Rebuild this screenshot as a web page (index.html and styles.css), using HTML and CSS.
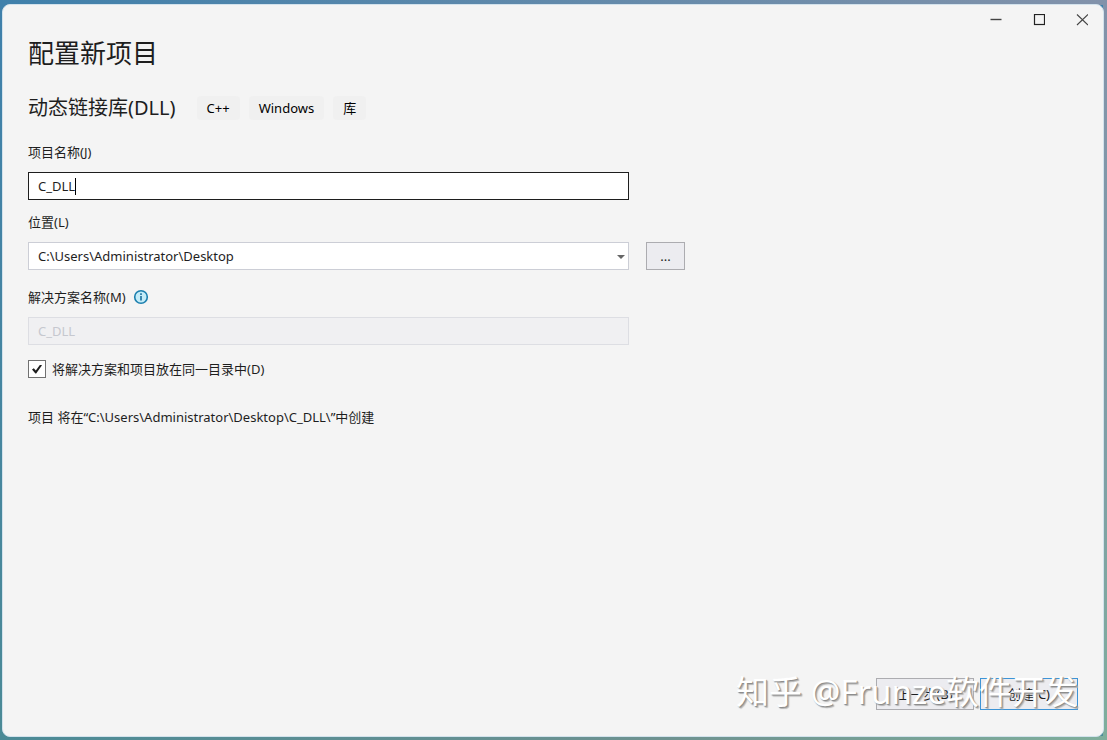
FILE: index.html
```
<!DOCTYPE html>
<html lang="zh-CN">
<head>
    <meta charset="UTF-8">
    <meta name="viewport" content="width=device-width, initial-scale=1.0">
    <title>配置新项目</title>
    <link rel="stylesheet" href="styles.css">
</head>
<body>
    <div class="window">
        <!-- Window controls -->
        <div class="titlebar">
            <button class="win-btn" type="button" aria-label="最小化">
                <svg width="12" height="12" viewBox="0 0 12 12"><path d="M0.5 5.5H11.5" stroke="#444" stroke-width="1.4"/></svg>
            </button>
            <button class="win-btn" type="button" aria-label="最大化">
                <svg width="12" height="12" viewBox="0 0 12 12"><rect x="1.5" y="0.5" width="10" height="10" fill="none" stroke="#222" stroke-width="1.2"/></svg>
            </button>
            <button class="win-btn" type="button" aria-label="关闭">
                <svg width="12" height="12" viewBox="0 0 12 12"><path d="M1 0.5L12 11M12 0.5L1 11" stroke="#444" stroke-width="1.1"/></svg>
            </button>
        </div>

        <form class="content">
            <h1>配置新项目</h1>

            <div class="template">
                <h2>动态链接库(DLL)</h2>
                <span class="tag">C++</span>
                <span class="tag">Windows</span>
                <span class="tag">库</span>
            </div>

            <label class="label" for="project-name">项目名称(J)</label>
            <div class="row">
                <div class="field">
                    <input class="input input-active" id="project-name" type="text" value="C_DLL">
                    <span class="caret"></span>
                </div>
            </div>

            <label class="label" for="location">位置(L)</label>
            <div class="row">
                <div class="field">
                    <select class="input" id="location">
                        <option>C:\Users\Administrator\Desktop</option>
                    </select>
                    <span class="arrow"></span>
                </div>
                <button class="btn btn-browse" type="button">...</button>
            </div>

            <div class="label label-info">
                <label for="solution-name">解决方案名称(M)</label>
                <svg width="16" height="16" viewBox="0 0 16 16">
                    <circle cx="8" cy="8" r="6.3" fill="#c4ecf8" stroke="#1b7fae" stroke-width="1.6"/>
                    <path d="M8 7V11.5M8 4.3V5.9" stroke="#1b6f9c" stroke-width="1.6"/>
                </svg>
            </div>
            <div class="row">
                <div class="field">
                    <input class="input" id="solution-name" type="text" value="C_DLL" disabled>
                </div>
            </div>

            <div class="check">
                <input id="same-dir" type="checkbox" checked>
                <label for="same-dir">将解决方案和项目放在同一目录中(D)</label>
            </div>

            <p class="summary">项目 将在“C:\Users\Administrator\Desktop\C_DLL\”中创建</p>
        </form>

        <div class="footer">
            <button class="btn" type="button">上一步(B)</button>
            <button class="btn btn-create" type="button">创建(C)</button>
            <span class="watermark">知乎 @Frunze软件开发</span>
        </div>
    </div>
</body>
</html>
```

FILE: styles.css
```
* {
    box-sizing: border-box;
}
body {
    margin: 0;
    padding: 4px 3px 3px 2px;
    min-height: 100vh;
    display: flex;
    font-family: "Noto Sans", "Noto Sans CJK SC", sans-serif;
    font-size: 13px;
    line-height: 20px;
    color: #1e1e1e;
    background: linear-gradient(#8292aa, #7f9fa6 60%, #7fae9c) right / 4px 100% no-repeat,
        linear-gradient(to right, #3f80ab, #8292aa) top / 100% 5px no-repeat,
        linear-gradient(to right, #4b8a96, #6e9290 60%, #7fae9c) bottom / 100% 4px no-repeat,
        linear-gradient(#3f80ab, #4b8a96);
}
.window {
    flex: 1;
    display: flex;
    flex-direction: column;
    background-color: #f4f4f4;
    border: 1px solid #d3e2ec;
    border-radius: 8px;
}
.titlebar {
    display: flex;
    justify-content: flex-end;
}
.win-btn {
    display: flex;
    align-items: center;
    justify-content: center;
    width: 43px;
    height: 30px;
    padding: 0;
    border: none;
    background: none;
}
.content {
    flex: 1;
    padding: 0 25px;
}
h1 {
    margin: 0;
    font-size: 26px;
    line-height: 36px;
    font-weight: normal;
}
.template {
    display: flex;
    align-items: center;
    gap: 9px;
    margin: 21px 0 18px;
}
h2 {
    margin: 0 12px 0 0;
    font-size: 20px;
    line-height: 32px;
    font-weight: normal;
}
.tag {
    padding: 2px 10px;
    color: #000;
    background-color: #f0f0f0;
    border-radius: 4px;
}
.label {
    display: block;
}
.label-info {
    display: flex;
    align-items: center;
    gap: 7px;
    margin-top: 17px;
}
.row {
    display: flex;
    gap: 17px;
    margin: 10px 0 12px;
}
.field {
    position: relative;
    flex: 0 1 601px;
}
.input {
    display: block;
    width: 100%;
    height: 28px;
    padding: 0 9px;
    font: inherit;
    color: #1e1e1e;
    background-color: #fff;
    border: 1px solid #ccced6;
    border-radius: 0;
    outline: none;
    appearance: none;
}
.input-active {
    border-color: #1e1e1e;
}
.input:disabled {
    color: #c6c8cf;
    background-color: #f0f0f2;
    border-color: #dddee3;
}
.caret {
    position: absolute;
    top: 6px;
    left: 47px;
    width: 1px;
    height: 17px;
    background-color: #000;
}
.arrow {
    position: absolute;
    top: 13px;
    right: 4px;
    border: 4px solid transparent;
    border-top-color: #666;
    border-bottom: none;
}
.btn {
    width: 98px;
    height: 32px;
    padding: 0;
    font: inherit;
    color: #1e1e1e;
    background-color: #ececf0;
    border: 1px solid #acacb0;
}
.btn-browse {
    width: 39px;
    height: 28px;
}
.btn-create {
    border-color: #3d94d6;
}
.check {
    display: flex;
    align-items: center;
    gap: 6px;
    margin-top: 14px;
}
.check input {
    width: 18px;
    height: 18px;
    margin: 0;
    appearance: none;
    background-color: #fff;
    border: 1px solid #717171;
    display: grid;
    place-items: center;
}
/* check mark */
.check input:checked::before {
    content: "";
    width: 10px;
    height: 9px;
    background-color: #1e1e1e;
    clip-path: polygon(0 55%, 18% 42%, 38% 66%, 82% 0, 100% 8%, 42% 100%, 34% 100%);
}
.summary {
    margin: 28px 0 0;
}
.footer {
    position: relative;
    display: flex;
    justify-content: flex-end;
    gap: 6px;
    padding: 0 25px 26px;
}
.watermark {
    position: absolute;
    right: 25px;
    top: -10px;
    font-size: 33px;
    line-height: 48px;
    white-space: nowrap;
    color: #fff;
    text-shadow: 1px 1px 1px #888, 2px 2px 1px #bbb;
    pointer-events: none;
}
```
